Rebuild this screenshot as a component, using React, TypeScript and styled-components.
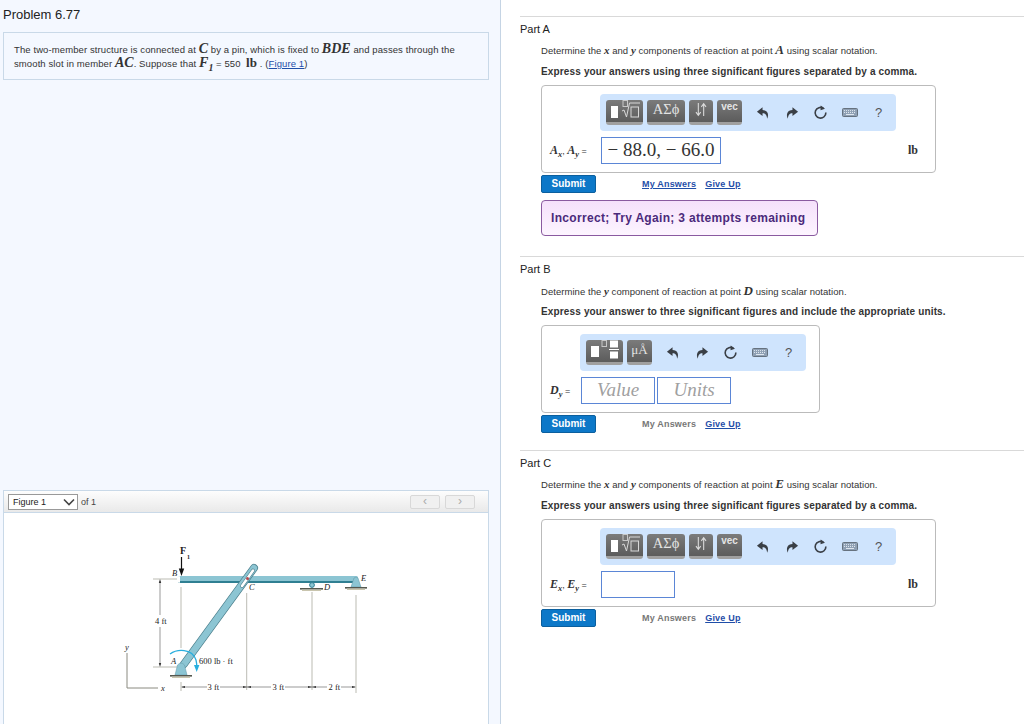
import React from "react";
import styled, { createGlobalStyle } from "styled-components";

const GlobalStyle = createGlobalStyle`
  html, body {
    margin: 0;
    padding: 0;
    height: 724px;
    overflow: hidden;
    background: #fff;
    font-family: "Liberation Sans", Arial, sans-serif;
  }
`;

function UndoIcon() {
  return (
    <svg width="14" height="14" viewBox="0 0 12 12">
      <path d="M5.6 1 L0.8 5 L5.6 8.6 V6.2 C7.8 6.1 9.2 7.4 9.6 11 C11.4 6.8 9.8 3.6 5.6 3.4 Z" fill="#3a3f46" />
    </svg>
  );
}

function RedoIcon() {
  return (
    <svg width="14" height="14" viewBox="0 0 12 12">
      <path d="M6.4 1 L11.2 5 L6.4 8.6 V6.2 C4.2 6.1 2.8 7.4 2.4 11 C0.6 6.8 2.2 3.6 6.4 3.4 Z" fill="#3a3f46" />
    </svg>
  );
}

function RefreshIcon() {
  return (
    <svg width="15" height="15" viewBox="0 0 14 14">
      <path d="M9.800 3.100 A5 5 0 1 0 12 7" fill="none" stroke="#3a3f46" strokeWidth="1.500" />
      <path d="M7.200 0.400 L11.200 3.400 L7 5 Z" fill="#3a3f46" />
    </svg>
  );
}

function KeyboardIcon() {
  return (
    <svg width="16" height="9" viewBox="0 0 16 9">
      <rect x="0.500" y="0.500" width="15" height="8" rx="1" fill="#8fa0b4" stroke="#66727f" />
      <path d="M2 2.600 H14 M2 4.500 H14" stroke="#dfe6ee" strokeDasharray="1 1" />
      <path d="M4 6.500 H12" stroke="#dfe6ee" />
    </svg>
  );
}

function SqrtTemplate() {
  return (
    <svg width="37" height="24" viewBox="0 0 37 24">
      <rect x="5" y="8" width="7" height="12" fill="#fff" />
      <rect x="17" y="2.500" width="4.500" height="6" fill="none" stroke="#c8c8c8" />
      <path d="M16 13 L18 12 L20.500 19 L23.500 5 H34" fill="none" stroke="#d8d8d8" />
      <rect x="25" y="9" width="7.500" height="10" fill="none" stroke="#d8d8d8" />
    </svg>
  );
}

function UnitsTemplate() {
  return (
    <svg width="37" height="24" viewBox="0 0 37 24">
      <rect x="5" y="8" width="8" height="11" fill="#fff" />
      <rect x="16" y="2.500" width="4.500" height="6" fill="none" stroke="#c8c8c8" />
      <rect x="24" y="2.500" width="8" height="7" fill="#fff" />
      <path d="M23 11.500 H33" stroke="#fff" />
      <rect x="24" y="13.500" width="8" height="7" fill="#fff" />
    </svg>
  );
}

function ArrowsIcon() {
  return (
    <svg width="14" height="15" viewBox="0 0 13 14">
      <path d="M4 1 V12 M1.800 9.400 L4 12.400 L6.200 9.400 M9 13 V2 M6.800 4.600 L9 1.600 L11.200 4.600" fill="none" stroke="#dcdcdc" strokeWidth="1" />
    </svg>
  );
}

function Diagram() {
  return (
    <svg width="484" height="211" viewBox="4 513 484 211">
      <g stroke="#a9a9a0" strokeWidth="0.8" fill="none">
        <path d="M153 579 H177 M153 667 H177" />
        <path d="M181 587 V648" />
        <path d="M246.700 593 V690 M312 592 V690 M356 595 V693 M181 682 V691" />
      </g>
      <g stroke="#555" strokeWidth="0.6" fill="none">
        <path d="M160 581 V615 M160 627 V665" />
        <path d="M182 687 H207 M220 687 H271 M285 687 H327 M341 687 H355" />
      </g>
      <path d="M160 579 L158.800 583 H161.200 Z M160 667 L158.800 663 H161.200 Z" fill="#333" />
      <path d="M181 687 L185 686 V688 Z M247 687 L243 686 V688 Z M247 687 L251 686 V688 Z M312 687 L308 686 V688 Z M312 687 L316 686 V688 Z M356 687 L352 686 V688 Z" fill="#333" />

      <rect x="178" y="576" width="180" height="7" rx="1.500" fill="#8cc5d3" />
      <rect x="178" y="581" width="180" height="2" fill="#2f7f92" />
      <rect x="178" y="576" width="2" height="7" rx="1" fill="#fff" />

      <path d="M184 664 L254 568" stroke="#4d7f8c" strokeWidth="8" strokeLinecap="round" />
      <path d="M184 664 L254 568" stroke="#8cc5d3" strokeWidth="6.400" strokeLinecap="round" />
      <path d="M242 586 L253 570.500" stroke="#4d7f8c" strokeWidth="3.800" strokeLinecap="round" />
      <path d="M242 586 L253 570.500" stroke="#fff" strokeWidth="2.600" strokeLinecap="round" />
      <circle cx="247.500" cy="578.500" r="1.500" fill="#b5484f" />

      <path d="M175 675 L177.500 665 Q181 661 184.500 665 L187 675 Z" fill="#8cc5d3" stroke="#5f97a5" strokeWidth="0.500" />
      <rect x="170" y="675" width="22" height="1.600" fill="#55584f" />
      <rect x="172" y="676.600" width="18" height="1.400" fill="#c9c5ae" />

      <circle cx="312" cy="585" r="2.400" fill="#8cc5d3" stroke="#2f7f92" />
      <rect x="300" y="588" width="23" height="1.600" fill="#55584f" />
      <rect x="302" y="589.600" width="19" height="1.400" fill="#c9c5ae" />

      <path d="M351 587 L354 578 Q356 576 358 578 L361 587 Z" fill="#8cc5d3" stroke="#5f97a5" strokeWidth="0.500" />
      <rect x="345" y="587" width="22" height="1.600" fill="#55584f" />
      <rect x="347" y="588.600" width="18" height="1.400" fill="#c9c5ae" />

      <path d="M181.500 557 V570" stroke="#111" strokeWidth="1.200" />
      <path d="M181.500 576 L178.800 568.500 H184.200 Z" fill="#111" />

      <path d="M170 654 C177 649 192 648 196 660 Q197 664 196.700 668" fill="none" stroke="#28aede" strokeWidth="1.300" />
      <path d="M196.700 672 L194 665 H199.400 Z" fill="#28aede" />

      <path d="M127 653 V688 H158" fill="none" stroke="#8a8a80" strokeWidth="1" />

      <g fontFamily="'Liberation Serif', serif" fontSize="8.500" fill="#222">
        <text x="180" y="554" fontWeight="bold" fontSize="10">F</text>
        <text x="187" y="559" fontSize="6" fontWeight="bold">1</text>
        <text x="172" y="576" fontStyle="italic">B</text>
        <text x="249" y="590" fontStyle="italic">C</text>
        <text x="324" y="590" fontStyle="italic">D</text>
        <text x="361" y="581" fontStyle="italic">E</text>
        <text x="171" y="664" fontStyle="italic">A</text>
        <text x="155" y="624">4 ft</text>
        <text x="199" y="664">600 lb · ft</text>
        <text x="207.500" y="690">3 ft</text>
        <text x="272.500" y="690">3 ft</text>
        <text x="328.500" y="690">2 ft</text>
        <text x="125" y="650" fontStyle="italic">y</text>
        <text x="161" y="691" fontStyle="italic">x</text>
      </g>
    </svg>
  );
}

interface ToolbarProps {
  offset: number;
  children: React.ReactNode;
}

function EditorToolbar({ offset, children }: ToolbarProps) {
  return (
    <Toolbar $offset={offset}>
      {children}
      <ToolGap />
      <ToolSlot><UndoIcon /></ToolSlot>
      <ToolSlot><RedoIcon /></ToolSlot>
      <ToolSlot><RefreshIcon /></ToolSlot>
      <ToolSlot><KeyboardIcon /></ToolSlot>
      <HelpSlot>?</HelpSlot>
    </Toolbar>
  );
}

function MathButtons() {
  return (
    <>
      <ToolButton $w={37}><SqrtTemplate /></ToolButton>
      <ToolButton $w={38}><SymbolText $size={14.500}>ΑΣϕ</SymbolText></ToolButton>
      <ToolButton $w={24}><ArrowsIcon /></ToolButton>
      <ToolButton $w={25}><VecText>vec</VecText></ToolButton>
    </>
  );
}

export default function App() {
  return (
    <>
      <GlobalStyle />
      <Page>
        <LeftColumn>
          <ProblemTitle>Problem 6.77</ProblemTitle>
          <IntroBox>
            The two-member structure is connected at <MathText $size={14}>C</MathText> by a pin, which is fixed to{" "}
            <MathText $size={14}>BDE</MathText> and passes through the smooth slot in member <MathText $size={14}>AC</MathText>.
            Suppose that <MathText $size={14}>F<sub>1</sub></MathText> = 550 &nbsp;<LbText>lb</LbText> . (<PlainLink>Figure 1</PlainLink>)
          </IntroBox>
          <FigurePanel>
            <FigureHeader>
              <FigureSelect>
                Figure 1
                <svg width="12" height="8" viewBox="0 0 12 8">
                  <path d="M1 1.500 L6 6.500 L11 1.500" fill="none" stroke="#444" strokeWidth="1.600" />
                </svg>
              </FigureSelect>
              <FigureCount>of 1</FigureCount>
              <NavButtons>
                <NavButton>‹</NavButton>
                <NavButton>›</NavButton>
              </NavButtons>
            </FigureHeader>
            <Diagram />
          </FigurePanel>
        </LeftColumn>

        <RightColumn>
          <PartSection $top={16}>
            <PartTitle>Part A</PartTitle>
            <PartBody>
              <Prompt>
                Determine the <MathText $size={11}>x</MathText> and <MathText $size={11}>y</MathText> components of reaction at point{" "}
                <MathText $size={13}>A</MathText> using scalar notation.
              </Prompt>
              <Instruction>Express your answers using three significant figures separated by a comma.</Instruction>
              <AnswerBox $w={395}>
                <EditorToolbar offset={58}><MathButtons /></EditorToolbar>
                <AnswerRow>
                  <AnswerLabel $w={59}>
                    <MathText $size={12}>A<sub>x</sub></MathText>, <MathText $size={12}>A<sub>y</sub></MathText> =
                  </AnswerLabel>
                  <AnswerInput $w={120}>− 88.0, − 66.0</AnswerInput>
                  <UnitLabel>lb</UnitLabel>
                </AnswerRow>
              </AnswerBox>
              <ActionRow>
                <SubmitButton>Submit</SubmitButton>
                <ActionLink $active>My Answers</ActionLink>
                <ActionLink $active>Give Up</ActionLink>
              </ActionRow>
              <FeedbackBox>Incorrect; Try Again; 3 attempts remaining</FeedbackBox>
            </PartBody>
          </PartSection>

          <PartSection $top={20}>
            <PartTitle>Part B</PartTitle>
            <PartBody>
              <Prompt $tight>
                Determine the <MathText $size={11}>y</MathText> component of reaction at point{" "}
                <MathText $size={13}>D</MathText> using scalar notation.
              </Prompt>
              <Instruction>Express your answer to three significant figures and include the appropriate units.</Instruction>
              <AnswerBox $w={279}>
                <EditorToolbar offset={38}>
                  <ToolButton $w={37}><UnitsTemplate /></ToolButton>
                  <ToolButton $w={25}><SymbolText $size={13}>μÅ</SymbolText></ToolButton>
                </EditorToolbar>
                <AnswerRow>
                  <AnswerLabel $w={39}>
                    <MathText $size={12}>D<sub>y</sub></MathText> =
                  </AnswerLabel>
                  <AnswerInput $w={74} $placeholder>Value</AnswerInput>
                  <AnswerInput $w={74} $placeholder $gap>Units</AnswerInput>
                </AnswerRow>
              </AnswerBox>
              <ActionRow>
                <SubmitButton>Submit</SubmitButton>
                <ActionLink>My Answers</ActionLink>
                <ActionLink $active>Give Up</ActionLink>
              </ActionRow>
            </PartBody>
          </PartSection>

          <PartSection $top={17}>
            <PartTitle>Part C</PartTitle>
            <PartBody>
              <Prompt>
                Determine the <MathText $size={11}>x</MathText> and <MathText $size={11}>y</MathText> components of reaction at point{" "}
                <MathText $size={13}>E</MathText> using scalar notation.
              </Prompt>
              <Instruction>Express your answers using three significant figures separated by a comma.</Instruction>
              <AnswerBox $w={395}>
                <EditorToolbar offset={58}><MathButtons /></EditorToolbar>
                <AnswerRow>
                  <AnswerLabel $w={59}>
                    <MathText $size={12}>E<sub>x</sub></MathText>, <MathText $size={12}>E<sub>y</sub></MathText> =
                  </AnswerLabel>
                  <AnswerInput $w={74} />
                  <UnitLabel>lb</UnitLabel>
                </AnswerRow>
              </AnswerBox>
              <ActionRow>
                <SubmitButton>Submit</SubmitButton>
                <ActionLink>My Answers</ActionLink>
                <ActionLink $active>Give Up</ActionLink>
              </ActionRow>
            </PartBody>
          </PartSection>
        </RightColumn>
      </Page>
    </>
  );
}

const Page = styled.div`
  display: flex;
  width: 1024px;
  height: 724px;
  overflow: hidden;
`;
const LeftColumn = styled.div`
  box-sizing: border-box;
  width: 501px;
  height: 724px;
  padding: 0 11px 0 3px;
  background: #f4f8ff;
  border-right: 1px solid #c5d4e4;
`;
const ProblemTitle = styled.div`
  height: 32px;
  padding-top: 7px;
  box-sizing: border-box;
  font-size: 13px;
  line-height: 15px;
  color: #222;
`;
const IntroBox = styled.div`
  box-sizing: border-box;
  height: 48px;
  padding: 9px 10px 0;
  border: 1px solid #c9d9e8;
  font-size: 9.500px;
  line-height: 13px;
  letter-spacing: 0.1px;
  color: #333;
`;
const MathText = styled.i<{ $size: number }>`
  font-family: "Liberation Serif", serif;
  font-weight: bold;
  font-size: ${(p) => p.$size}px;
  line-height: 1;
  letter-spacing: 0;
  color: #333;
  sub {
    font-size: 0.7em;
    line-height: 0;
  }
`;
const LbText = styled.span`
  font-family: "Liberation Serif", serif;
  font-weight: bold;
  font-size: 13px;
  line-height: 1;
`;
const PlainLink = styled.span`
  color: #1f4ea8;
  text-decoration: underline;
`;
const FigurePanel = styled.div`
  box-sizing: border-box;
  height: 234px;
  margin-top: 410px;
  border: 1px solid #c9d9e8;
  border-bottom: none;
  background: #fff;
`;
const FigureHeader = styled.div`
  box-sizing: border-box;
  display: flex;
  align-items: center;
  height: 22px;
  padding: 0 13px 0 4px;
  background: linear-gradient(#fdfdfd, #e9e9e9);
  border-bottom: 1px solid #c9d9e8;
`;
const FigureSelect = styled.div`
  box-sizing: border-box;
  display: flex;
  align-items: center;
  justify-content: space-between;
  width: 70px;
  height: 16px;
  padding: 0 2px 0 4px;
  background: #fff;
  border: 1px solid #999;
  font-size: 9px;
  color: #222;
`;
const FigureCount = styled.span`
  margin-left: 3px;
  font-size: 9px;
  color: #444;
`;
const NavButtons = styled.div`
  display: flex;
  gap: 5px;
  margin-left: auto;
`;
const NavButton = styled.div`
  box-sizing: border-box;
  width: 30px;
  height: 14px;
  border: 1px solid #d8d8d8;
  border-radius: 2px;
  background: #f0f0f0;
  color: #aaa;
  font-size: 12px;
  line-height: 11px;
  text-align: center;
`;
const RightColumn = styled.div`
  flex: 1;
  padding-left: 19px;
  min-width: 0;
`;
const PartSection = styled.section<{ $top: number }>`
  margin-top: ${(p) => p.$top}px;
  border-top: 1px solid #d9d9d9;
`;
const PartTitle = styled.div`
  margin-top: 6px;
  font-size: 11px;
  line-height: 13px;
  color: #222;
`;
const PartBody = styled.div`
  padding-left: 21px;
`;
const Prompt = styled.div<{ $tight?: boolean }>`
  height: ${(p) => (p.$tight ? 13 : 14)}px;
  margin-top: ${(p) => (p.$tight ? 8 : 7)}px;
  font-size: 9.500px;
  line-height: 14px;
  letter-spacing: 0.05px;
  color: #333;
`;
const Instruction = styled.div`
  margin-top: 8px;
  font-size: 10px;
  line-height: 13px;
  font-weight: bold;
  letter-spacing: 0.15px;
  color: #333;
`;
const AnswerBox = styled.div<{ $w: number }>`
  box-sizing: border-box;
  width: ${(p) => p.$w}px;
  height: 88px;
  margin-top: 7px;
  padding-top: 8px;
  border: 1px solid #bbb;
  border-radius: 4px;
`;
const Toolbar = styled.div<{ $offset: number }>`
  display: inline-flex;
  align-items: center;
  gap: 4px;
  height: 37px;
  margin-left: ${(p) => p.$offset}px;
  padding: 0 5px 0 6px;
  box-sizing: border-box;
  background: #cfe4fd;
  border-radius: 4px;
`;
const ToolButton = styled.div<{ $w: number }>`
  box-sizing: border-box;
  display: flex;
  justify-content: center;
  align-items: center;
  width: ${(p) => p.$w}px;
  height: 25px;
  padding-bottom: 3px;
  background: linear-gradient(#7b7b7b, #5c5c5c);
  border-bottom: 3px solid #a0a0a0;
  border-radius: 3px;
  overflow: hidden;
`;
const SymbolText = styled.span<{ $size: number }>`
  font-family: "Liberation Serif", serif;
  font-size: ${(p) => p.$size}px;
  color: #e4e4e4;
`;
const VecText = styled.span`
  font-size: 10px;
  font-weight: bold;
  color: #e4e4e4;
  margin-top: -6px;
`;
const ToolGap = styled.div`
  width: 0;
`;
const ToolSlot = styled.div`
  display: flex;
  justify-content: center;
  align-items: center;
  width: 25px;
  height: 20px;
`;
const HelpSlot = styled(ToolSlot)`
  font-size: 13px;
  color: #555;
`;
const AnswerRow = styled.div`
  display: flex;
  align-items: center;
  height: 26px;
  margin-top: 6px;
  padding-right: 17px;
`;
const AnswerLabel = styled.div<{ $w: number }>`
  box-sizing: border-box;
  width: ${(p) => p.$w}px;
  padding-left: 8px;
  font-size: 9px;
  white-space: nowrap;
  color: #333;
`;
const AnswerInput = styled.div<{ $w: number; $placeholder?: boolean; $gap?: boolean }>`
  box-sizing: border-box;
  width: ${(p) => p.$w}px;
  height: 27px;
  margin-left: ${(p) => (p.$gap ? 2 : 0)}px;
  border: 1px solid #5b86d6;
  font-family: "Liberation Serif", serif;
  font-size: 19px;
  font-style: ${(p) => (p.$placeholder ? "italic" : "normal")};
  line-height: 24px;
  text-align: center;
  white-space: nowrap;
  color: ${(p) => (p.$placeholder ? "#a0a0a0" : "#333")};
`;
const UnitLabel = styled.span`
  margin-left: auto;
  font-family: "Liberation Serif", serif;
  font-weight: bold;
  font-size: 12px;
  color: #333;
`;
const ActionRow = styled.div`
  display: flex;
  align-items: center;
  height: 18px;
  margin-top: 2px;
`;
const SubmitButton = styled.div`
  box-sizing: border-box;
  width: 55px;
  height: 18px;
  margin-right: 46px;
  background: #0d78c8;
  border: 1px solid #0b5f9e;
  border-radius: 2px;
  color: #fff;
  font-size: 10px;
  font-weight: bold;
  line-height: 16px;
  text-align: center;
`;
const ActionLink = styled.span<{ $active?: boolean }>`
  margin-right: 9px;
  font-size: 9px;
  font-weight: bold;
  letter-spacing: 0.2px;
  color: ${(p) => (p.$active ? "#1f4ea8" : "#777")};
  text-decoration: ${(p) => (p.$active ? "underline" : "none")};
`;
const FeedbackBox = styled.div`
  box-sizing: border-box;
  width: 277px;
  height: 36px;
  margin-top: 7px;
  padding-left: 9px;
  background: linear-gradient(#f5e0fb, #fdf5ff);
  border: 1px solid #8a5aa0;
  border-radius: 4px;
  color: #4b2a7b;
  font-size: 12px;
  font-weight: bold;
  line-height: 34px;
  letter-spacing: 0.32px;
  white-space: nowrap;
`;
